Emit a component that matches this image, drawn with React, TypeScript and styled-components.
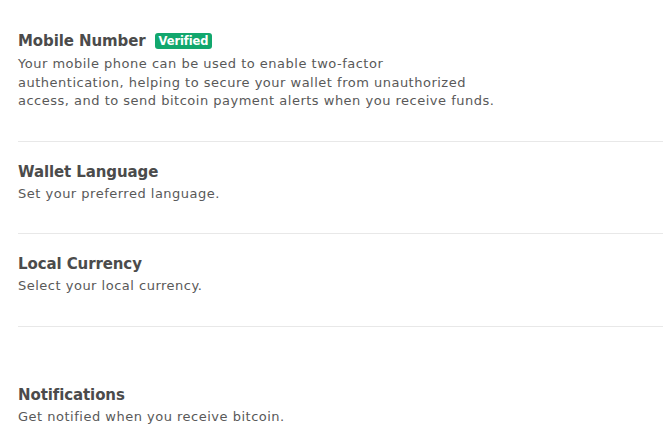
import React from 'react';
import styled, { createGlobalStyle } from 'styled-components';

const GlobalStyle = createGlobalStyle`
  body {
    margin: 0;
    background: #ffffff;
    font-family: 'DejaVu Sans', 'Open Sans', sans-serif;
  }
`;

const Page = styled.div`
  padding: 11px 0 0 18px;
`;

const Row = styled.section<{ spaced?: boolean; last?: boolean }>`
  padding: 20px 0 30px;
  margin-top: ${(p) => (p.spaced ? '38px' : '0')};
  border-bottom: ${(p) => (p.last ? 'none' : '1px solid #e8e8e8')};
`;

const TitleRow = styled.div<{ withBadge?: boolean }>`
  display: flex;
  align-items: center;
  gap: 9px;
  margin-bottom: ${(p) => (p.withBadge ? '4px' : '3px')};
`;

const Title = styled.h3`
  margin: 0;
  font-size: 15px;
  line-height: 20px;
  font-weight: 700;
  color: #4b4b4b;
  letter-spacing: -0.1px;
`;

const Badge = styled.span`
  display: inline-flex;
  align-items: center;
  justify-content: center;
  height: 16px;
  padding: 0 4px;
  border-radius: 3px;
  background: #12a76d;
  color: #ffffff;
  font-size: 11.5px;
  font-weight: 700;
  letter-spacing: -0.1px;
`;

const Description = styled.p`
  margin: 0;
  font-size: 13px;
  line-height: 18.5px;
  letter-spacing: 0.5px;
  color: #595959;
  white-space: pre-line;
`;

interface SettingProps {
  title: string;
  badge?: string;
  description: string;
  spaced?: boolean;
  last?: boolean;
}

const Setting: React.FC<SettingProps> = ({ title, badge, description, spaced, last }) => (
  <Row spaced={spaced} last={last}>
    <TitleRow withBadge={!!badge}>
      <Title>{title}</Title>
      {badge && <Badge>{badge}</Badge>}
    </TitleRow>
    <Description>{description}</Description>
  </Row>
);

export default function App() {
  return (
    <>
      <GlobalStyle />
      <Page>
        <Setting
          title="Mobile Number"
          badge="Verified"
          description={
            'Your mobile phone can be used to enable two-factor\n' +
            'authentication, helping to secure your wallet from unauthorized\n' +
            'access, and to send bitcoin payment alerts when you receive funds.'
          }
        />
        <Setting title="Wallet Language" description="Set your preferred language." />
        <Setting title="Local Currency" description="Select your local currency." />
        <Setting
          title="Notifications"
          description="Get notified when you receive bitcoin."
          spaced
          last
        />
      </Page>
    </>
  );
}
